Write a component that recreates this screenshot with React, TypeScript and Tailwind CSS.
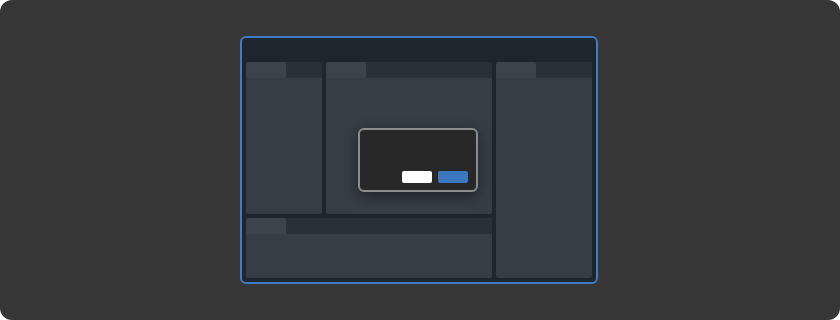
export default function App() {
  return (
    <div className="h-[320px] w-[840px] bg-white">
      <div className="flex h-full w-full items-start justify-start rounded-xl bg-[#363636] pl-[240px] pt-[36px]">
        {/* Window */}
        <div className="relative flex h-[248px] w-[358px] flex-col rounded-md border-2 border-[#3f7cc4] bg-[#1f252c]">
          <div className="h-[24px] shrink-0" />
          <div className="grid grid-cols-[76px_166px_96px] grid-rows-[152px_60px] gap-[4px] px-[4px]">
            <Panel />
            <Panel />
            <Panel className="row-span-2" />
            <Panel className="col-span-2" />
          </div>

          {/* Dialog */}
          <div className="absolute left-[116px] top-[90px] flex h-[64px] w-[120px] items-end justify-end gap-[6px] rounded-md border-2 border-[#8c8c8c] bg-[#282828] pb-[7px] pr-[8px] shadow-[0_4px_14px_rgba(0,0,0,0.45)]">
            <div className="h-[12px] w-[30px] rounded-[2px] bg-white" />
            <div className="h-[12px] w-[30px] rounded-[2px] bg-[#3b78c0]" />
          </div>
        </div>
      </div>
    </div>
  );
}

function Panel({ className = '' }: { className?: string }) {
  return (
    <div className={`flex flex-col overflow-hidden rounded-[2px] bg-[#373d45] ${className}`}>
      <div className="flex h-[16px] shrink-0 bg-[#2a3037]">
        <div className="w-[40px] rounded-t-[2px] bg-[#3d434b]" />
      </div>
    </div>
  );
}
